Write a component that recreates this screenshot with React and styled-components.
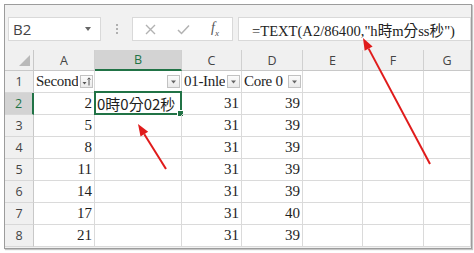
import styled, { createGlobalStyle } from "styled-components";

const GlobalStyle = createGlobalStyle`
  html, body {
    margin: 0;
    padding: 0;
    background: #ffffff;
  }
  body {
    font-family: "Open Sans", "Liberation Sans", sans-serif;
  }
`;

const GREEN = "#217346";
const COLS = ["A", "B", "C", "D", "E", "F", "G"];

const rows = [
  { a: 2, b: "0時0分02秒", c: 31, d: 39 },
  { a: 5, c: 31, d: 39 },
  { a: 8, c: 31, d: 39 },
  { a: 11, c: 31, d: 39 },
  { a: 14, c: 31, d: 39 },
  { a: 17, c: 31, d: 40 },
  { a: 21, c: 31, d: 39 },
];

const Page = styled.div`
  position: relative;
  width: 474px;
  height: 253px;
  padding: 4px 0 0 4px;
  box-sizing: border-box;
`;

const Frame = styled.div`
  width: 468px;
  height: 245px;
  box-sizing: border-box;
  border: 1px solid #9c9c9c;
  box-shadow: 1px 1px 1px #c4c4c4;
  background: #f1f1f1;
  display: flex;
  flex-direction: column;
  overflow: hidden;
`;

const Toolbar = styled.div`
  height: 45px;
  flex-shrink: 0;
  box-sizing: border-box;
  padding: 12px 0 0 3px;
  display: flex;
  align-items: flex-start;
  background: #f1f1f1;
`;

const Field = styled.div`
  height: 24px;
  box-sizing: border-box;
  background: #ffffff;
  border: 1px solid #d9d9d9;
  display: flex;
  align-items: center;
`;

const NameBox = styled(Field)`
  width: 93px;
  justify-content: space-between;
  padding: 0 9px 0 4px;
  font-size: 15px;
  color: #444;
`;

const Caret = styled.span`
  width: 0;
  height: 0;
  border-left: 3.5px solid transparent;
  border-right: 3.5px solid transparent;
  border-top: 4px solid #666;
`;

const Grip = styled.div`
  width: 31px;
  height: 24px;
  display: flex;
  flex-direction: column;
  align-items: center;
  justify-content: center;
  gap: 2px;

  span {
    width: 2px;
    height: 2px;
    background: #b0b0b0;
  }
`;

const ButtonBox = styled(Field)`
  width: 101px;
  display: grid;
  grid-template-columns: 34px 33px 1fr;
  justify-items: center;
`;

const Fx = styled.span`
  font-family: "Liberation Serif", serif;
  font-style: italic;
  font-size: 14px;
  color: #555;
  padding-right: 2px;

  sub {
    font-size: 9px;
  }
`;

const FormulaBox = styled(Field)`
  flex: 1;
  margin-left: 5px;
  padding-left: 13px;
  font-family: "Liberation Serif", "Noto Sans CJK TC", serif;
  font-size: 14.6px;
  color: #222;
  white-space: nowrap;
`;

const Sheet = styled.div`
  display: grid;
  grid-template-columns: 29px 61px 87px 60px 61px 60px 61px 1fr;
  grid-template-rows: 21px repeat(8, 22px);
  background: #ffffff;
`;

const Corner = styled.div`
  background: #f0f0f0;
  border-right: 1px solid #c8c8c8;
  border-bottom: 1px solid #c8c8c8;
  display: flex;
  align-items: flex-end;
  justify-content: flex-end;
  padding: 0 3px 4px 0;

  span {
    width: 0;
    height: 0;
    border-left: 11px solid transparent;
    border-bottom: 11px solid #b9b9b9;
  }
`;

const ColHead = styled.div`
  background: ${(p) => (p.$active ? "#d3d3d3" : "#f0f0f0")};
  color: ${(p) => (p.$active ? GREEN : "#444")};
  border-right: 1px solid #d0d0d0;
  border-bottom: ${(p) => (p.$active ? `2px solid ${GREEN}` : "1px solid #c8c8c8")};
  font-size: 12.5px;
  display: flex;
  align-items: center;
  justify-content: center;
`;

const RowHead = styled.div`
  background: ${(p) => (p.$active ? "#d3d3d3" : "#f0f0f0")};
  color: ${(p) => (p.$active ? GREEN : "#444")};
  border-right: ${(p) => (p.$active ? `2px solid ${GREEN}` : "1px solid #c8c8c8")};
  border-bottom: 1px solid #d8d8d8;
  font-size: 12.5px;
  display: flex;
  align-items: center;
  justify-content: center;
`;

const Cell = styled.div`
  position: relative;
  min-width: 0;
  border-right: 1px solid #dadada;
  border-bottom: 1px solid #dadada;
  display: flex;
  align-items: center;
  justify-content: ${(p) => (p.$num ? "flex-end" : "space-between")};
  padding: 0 ${(p) => (p.$num ? "2px" : "1px")} 0 2px;
  font-family: ${(p) =>
    p.$cjk ? `"Noto Sans CJK TC", sans-serif` : `"Liberation Serif", "Noto Sans CJK TC", serif`};
  font-size: 15px;
  color: #1e1e1e;
  white-space: nowrap;
  overflow: ${(p) => (p.$selected ? "visible" : "hidden")};
`;

const Label = styled.span`
  overflow: hidden;
  min-width: 0;
  letter-spacing: -0.3px;
`;

const Selection = styled.span`
  position: absolute;
  top: -2px;
  left: -1px;
  right: -1px;
  bottom: -1px;
  border: 2px solid ${GREEN};
  pointer-events: none;
`;

const FillHandle = styled.span`
  position: absolute;
  right: -4px;
  bottom: -4px;
  width: 5px;
  height: 5px;
  background: ${GREEN};
  border: 1px solid #fff;
`;

const FilterButton = styled.span`
  flex-shrink: 0;
  width: 13px;
  height: 13px;
  box-sizing: border-box;
  border: 1px solid #c2c2c2;
  background: linear-gradient(#fbfbfb, #eaeaea);
  display: flex;
  align-items: center;
  justify-content: center;
`;

const Arrows = styled.svg`
  position: absolute;
  top: 0;
  left: 0;
  pointer-events: none;
`;

function Filter({ sorted }) {
  return (
    <FilterButton>
      <svg width="11" height="11" viewBox="0 0 11 11">
        {sorted ? (
          <>
            <path d="M1.5 6 L5.5 6 L3.5 8.5 Z" fill="#555" />
            <path d="M8 9.5 V2 M6.5 3.5 L8 1.8 L9.5 3.5" stroke="#555" strokeWidth="1" fill="none" />
          </>
        ) : (
          <path d="M3 4.5 L8 4.5 L5.5 7.5 Z" fill="#666" />
        )}
      </svg>
    </FilterButton>
  );
}

function Arrow({ x1, y1, x2, y2 }) {
  const dx = x2 - x1;
  const dy = y2 - y1;
  const len = Math.hypot(dx, dy);
  const ux = dx / len;
  const uy = dy / len;
  const bx = x2 - ux * 12;
  const by = y2 - uy * 12;
  const px = -uy * 4.5;
  const py = ux * 4.5;
  return (
    <g>
      <line x1={x1} y1={y1} x2={bx} y2={by} stroke="#e01b1b" strokeWidth="2" />
      <polygon
        points={`${x2},${y2} ${bx + px},${by + py} ${bx - px},${by - py}`}
        fill="#e01b1b"
      />
    </g>
  );
}

function Row({ n, r }) {
  const selected = n === 2;
  return (
    <>
      <RowHead $active={selected}>{n}</RowHead>
      <Cell $num>{r.a}</Cell>
      <Cell $cjk $selected={selected}>
        {r.b}
        {selected && (
          <Selection>
            <FillHandle />
          </Selection>
        )}
      </Cell>
      <Cell $num>{r.c}</Cell>
      <Cell $num>{r.d}</Cell>
      <Cell />
      <Cell />
      <Cell />
    </>
  );
}

export default function App() {
  return (
    <>
      <GlobalStyle />
      <Page>
        <Frame>
          <Toolbar>
            <NameBox>
              B2
              <Caret />
            </NameBox>
            <Grip>
              <span />
              <span />
              <span />
            </Grip>
            <ButtonBox>
              <svg width="11" height="11" viewBox="0 0 11 11">
                <path d="M1 1 L10 10 M10 1 L1 10" stroke="#b2b2b2" strokeWidth="1.4" />
              </svg>
              <svg width="13" height="11" viewBox="0 0 13 11">
                <path d="M1 6 L4.5 9.5 L12 1.5" stroke="#b2b2b2" strokeWidth="1.5" fill="none" />
              </svg>
              <Fx>
                f<sub>x</sub>
              </Fx>
            </ButtonBox>
            <FormulaBox>=TEXT(A2/86400,"h時m分ss秒")</FormulaBox>
          </Toolbar>

          <Sheet>
            <Corner>
              <span />
            </Corner>
            {COLS.map((c) => (
              <ColHead key={c} $active={c === "B"}>
                {c}
              </ColHead>
            ))}

            <RowHead>1</RowHead>
            <Cell>
              <Label>Second</Label>
              <Filter sorted />
            </Cell>
            <Cell>
              <Label />
              <Filter />
            </Cell>
            <Cell>
              <Label>01-Inle</Label>
              <Filter />
            </Cell>
            <Cell>
              <Label>Core 0</Label>
              <Filter />
            </Cell>
            <Cell />
            <Cell />
            <Cell />

            {rows.map((r, i) => (
              <Row key={i} n={i + 2} r={r} />
            ))}
          </Sheet>
        </Frame>

        <Arrows width="474" height="253">
          <Arrow x1={166} y1={169} x2={138} y2={124} />
          <Arrow x1={430} y1={164} x2={363} y2={38} />
        </Arrows>
      </Page>
    </>
  );
}
